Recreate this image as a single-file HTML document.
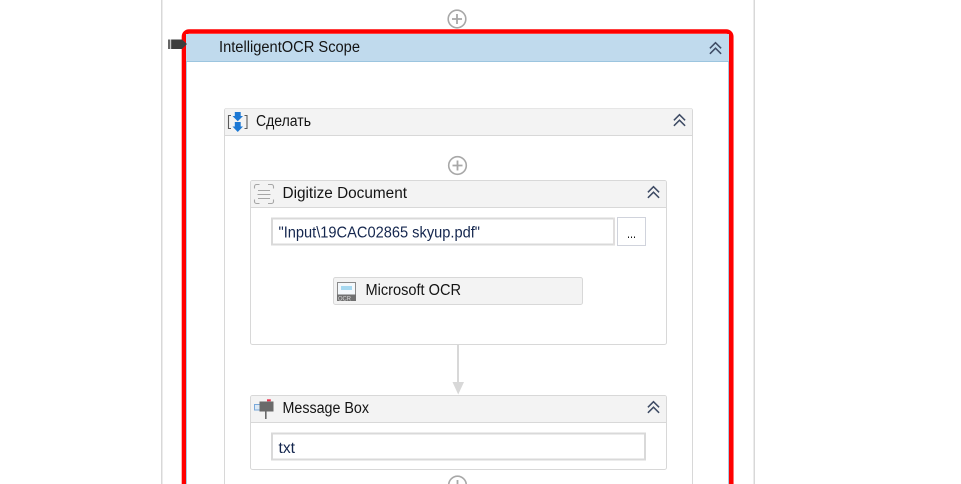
<!DOCTYPE html>
<html>
<head>
<meta charset="utf-8">
<style>
html,body{margin:0;padding:0;background:#fff;width:961px;height:484px;overflow:hidden}
svg{display:block}
text{font-family:"Liberation Sans",sans-serif;font-size:15.5px;fill:#141414}
.v{fill:#14264e}
</style>
</head>
<body>
<svg width="961" height="484" viewBox="0 0 961 484" xmlns="http://www.w3.org/2000/svg">
<defs>
<g id="chev" fill="none" stroke="#3d4a63" stroke-width="1.5">
<path d="M-5.6 0.3 L0 -5.3 L5.6 0.3"/>
<path d="M-5.6 5.8 L0 0.2 L5.6 5.8"/>
</g>
<g id="plus" fill="#fff" stroke="#a8a8a8">
<circle r="8.8" stroke-width="1.6"/>
<path d="M-5 0H5M0 -5V5" stroke-width="1.8" fill="none"/>
</g>
</defs>
<rect width="961" height="484" fill="#fff"/>

<!-- outer column lines -->
<rect x="161" y="0" width="1.5" height="484" fill="#d8d8d8"/>
<rect x="753.5" y="0" width="1.5" height="484" fill="#d8d8d8"/>

<use href="#plus" x="457" y="19"/>

<!-- red selection -->
<path d="M184 490V36.500a5 5 0 0 1 5-5H726a5 5 0 0 1 5.250 5V490" fill="none" stroke="#ff0000" stroke-width="4.600"/>
<!-- scope -->
<rect x="186" y="34" width="543" height="450" fill="#fff"/>
<rect x="186" y="34" width="1" height="450" fill="#a9cbe3"/>
<rect x="728" y="34" width="1" height="450" fill="#a9cbe3"/>
<rect x="186" y="34" width="543" height="27" fill="#c0daed"/>
<rect x="186" y="61" width="543" height="1" fill="#9cc5df"/>
<text x="219" y="52" textLength="141" lengthAdjust="spacingAndGlyphs">IntelligentOCR Scope</text>
<use href="#chev" x="715.500" y="48"/>

<!-- breakpoint tag -->
<path d="M168 39.500H182L187 44L182 49H168Z" fill="#3c3c3c"/>
<rect x="168" y="39.500" width="2" height="9.500" fill="#666"/>
<rect x="170" y="39.500" width="1.200" height="9.500" fill="#c8c8c8"/>

<!-- sequence -->
<rect x="224.500" y="108.500" width="468" height="400" rx="2" fill="#fff" stroke="#d8d8d8"/>
<path d="M225 135V110a1.500 1.500 0 0 1 1.500-1.500H690.500a1.500 1.500 0 0 1 1.500 1.500V135Z" fill="#f3f3f3"/>
<rect x="225" y="135" width="467" height="1" fill="#d8d8d8"/>
<text x="256" y="126" textLength="55" lengthAdjust="spacingAndGlyphs">Сделать</text>
<use href="#chev" x="679.500" y="120"/>
<!-- sequence icon -->
<path d="M231 115.500H228.500V128.500H231M244.500 115.500H247V128.500H244.500" fill="none" stroke="#5a5a5a" stroke-width="1.100"/>
<path d="M234.800 112H240.700V116H243L237.750 121.300L232.500 116H234.800Z" fill="#1c78d4"/>
<path d="M234.800 122H240.700V126.500H243L237.750 132L232.500 126.500H234.800Z" fill="#1c78d4"/>

<use href="#plus" x="457.500" y="165.500"/>

<!-- digitize -->
<rect x="250.500" y="180.500" width="416" height="164" rx="2" fill="#fff" stroke="#d8d8d8"/>
<path d="M251 207V182.500a1.500 1.500 0 0 1 1.500-1.500H664.500a1.500 1.500 0 0 1 1.500 1.500V207Z" fill="#f3f3f3"/>
<rect x="251" y="207" width="415" height="1" fill="#d8d8d8"/>
<text x="282.500" y="198" textLength="124.500" lengthAdjust="spacingAndGlyphs">Digitize Document</text>
<use href="#chev" x="653.500" y="192"/>
<!-- scan icon -->
<path d="M254.500 188.500V186.500a2 2 0 0 1 2-2H259.500M268 184.500H271.500a2 2 0 0 1 2 2V188.500M273.500 199.500V201.500a2 2 0 0 1-2 2H268M259.500 203.500H256.500a2 2 0 0 1-2-2V199.500" fill="none" stroke="#a6a6a6" stroke-width="1.100"/>
<path d="M258 190.500H270M257.500 194.500H270.500M258 198.500H270" fill="none" stroke="#a6a6a6" stroke-width="1.100"/>

<!-- input -->
<rect x="272" y="218.500" width="342" height="26" fill="#fff" stroke="#d9d9d9" stroke-width="2"/>
<rect x="613.500" y="217.500" width="1" height="27.500" fill="#e6e2e2"/>
<text class="v" x="278.500" y="237.500" textLength="201.500" lengthAdjust="spacingAndGlyphs">"Input\19CAC02865 skyup.pdf"</text>
<rect x="617.500" y="217.500" width="28" height="28" fill="#fff" stroke="#d0d3dc"/>
<text x="627" y="238" textLength="9" lengthAdjust="spacingAndGlyphs" style="font-size:14px">...</text>

<!-- Microsoft OCR -->
<rect x="333.500" y="277.500" width="249" height="27" rx="2" fill="#f3f3f3" stroke="#d8d8d8"/>
<text x="365.500" y="295" textLength="95.500" lengthAdjust="spacingAndGlyphs">Microsoft OCR</text>
<rect x="337.500" y="282.500" width="18" height="18" fill="#f4f8fb" stroke="#8a8a8a"/>
<rect x="341" y="286" width="11" height="4" fill="#a6d8f0"/>
<rect x="337" y="294.500" width="19" height="6.500" fill="#707070"/>
<text x="338" y="300.500" textLength="13" lengthAdjust="spacingAndGlyphs" style="font-size:6px;fill:#d8d8d8">OCR</text>

<!-- connector -->
<rect x="457" y="345" width="2" height="38" fill="#d8d8d8"/>
<path d="M452.500 382H464L458.200 394.500Z" fill="#d8d8d8"/>

<!-- message box -->
<rect x="250.500" y="395.500" width="416" height="74" rx="2" fill="#fff" stroke="#d8d8d8"/>
<path d="M251 422V397.500a1.500 1.500 0 0 1 1.500-1.500H664.500a1.500 1.500 0 0 1 1.500 1.500V422Z" fill="#f3f3f3"/>
<rect x="251" y="422" width="415" height="1" fill="#d8d8d8"/>
<text x="282.500" y="413" textLength="86.500" lengthAdjust="spacingAndGlyphs">Message Box</text>
<use href="#chev" x="653.500" y="407"/>
<!-- mailbox icon -->
<rect x="254.500" y="404.500" width="5.500" height="5.500" fill="#dbe9f6" stroke="#7aa9da"/>
<rect x="259.500" y="401.500" width="14" height="10" fill="#6a6a6a"/>
<rect x="267" y="399.300" width="3.800" height="2" fill="#e8344e"/>
<rect x="265" y="411.500" width="1.600" height="7.500" fill="#6a6a6a"/>

<rect x="272" y="433.500" width="373" height="26" fill="#fff" stroke="#d9d9d9" stroke-width="2"/>
<text class="v" x="278.500" y="453" textLength="16.500" lengthAdjust="spacingAndGlyphs">txt</text>

<use href="#plus" x="457.500" y="485"/>
</svg>
</body>
</html>
